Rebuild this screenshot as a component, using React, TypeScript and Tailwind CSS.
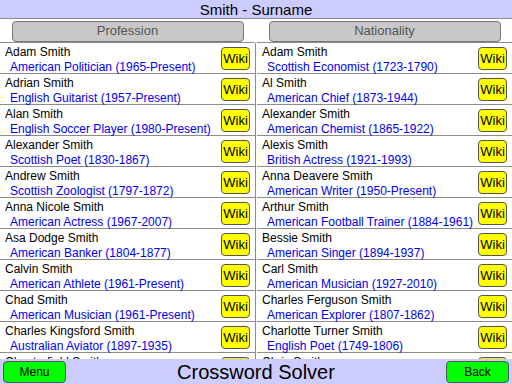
const left: [string, string][] = [
  ["Adam Smith", "American Politician (1965-Present)"],
  ["Adrian Smith", "English Guitarist (1957-Present)"],
  ["Alan Smith", "English Soccer Player (1980-Present)"],
  ["Alexander Smith", "Scottish Poet (1830-1867)"],
  ["Andrew Smith", "Scottish Zoologist (1797-1872)"],
  ["Anna Nicole Smith", "American Actress (1967-2007)"],
  ["Asa Dodge Smith", "American Banker (1804-1877)"],
  ["Calvin Smith", "American Athlete (1961-Present)"],
  ["Chad Smith", "American Musician (1961-Present)"],
  ["Charles Kingsford Smith", "Australian Aviator (1897-1935)"],
  ["Chesterfield Smith", "American Lawyer (1917-2003)"],
];

const right: [string, string][] = [
  ["Adam Smith", "Scottish Economist (1723-1790)"],
  ["Al Smith", "American Chief (1873-1944)"],
  ["Alexander Smith", "American Chemist (1865-1922)"],
  ["Alexis Smith", "British Actress (1921-1993)"],
  ["Anna Deavere Smith", "American Writer (1950-Present)"],
  ["Arthur Smith", "American Football Trainer (1884-1961)"],
  ["Bessie Smith", "American Singer (1894-1937)"],
  ["Carl Smith", "American Musician (1927-2010)"],
  ["Charles Ferguson Smith", "American Explorer (1807-1862)"],
  ["Charlotte Turner Smith", "English Poet (1749-1806)"],
  ["Chris Smith", "American Politician (1951-Present)"],
];

const Row = ({ name, desc }: { name: string; desc: string }) => (
  <div className="flex h-[31px] shrink-0 items-start border-b border-[#8c8c8c] pt-[2px]">
    <div className="flex-1 min-w-0 pl-[5px]">
      <div className="text-[12px] leading-[15px] text-black whitespace-nowrap">{name}</div>
      <div className="pl-[5px] text-[12px] leading-[15px] text-[#0000ee] whitespace-nowrap">{desc}</div>
    </div>
    <button className="mt-[2px] mr-[5px] h-[23px] w-[29px] rounded-[4px] border border-[#555] bg-[#ffff00] text-[13px] leading-none text-black">
      Wiki
    </button>
  </div>
);

const Column = ({ title, rows }: { title: string; rows: [string, string][] }) => (
  <div className="flex flex-1 flex-col min-w-0">
    <div className="flex h-[24px] shrink-0 items-center justify-center border-b border-[#8c8c8c] px-[8px] pt-px">
      <div className="flex h-[21px] w-[232px] items-center justify-center rounded-[4px] border border-[#777] bg-[#c8c8c8] text-[13px] text-[#555]">
        {title}
      </div>
    </div>
    <div className="flex flex-col overflow-hidden">
      {rows.map(([n, d]) => (
        <Row key={n + d} name={n} desc={d} />
      ))}
    </div>
  </div>
);

export default function App() {
  return (
    <div
      className="flex h-[384px] w-[512px] flex-col overflow-hidden bg-white"
      style={{ fontFamily: '"Liberation Sans", Arial, sans-serif' }}
    >
      <div className="flex h-[19px] shrink-0 items-center justify-center border-b border-[#8c8c8c] bg-[#ccccff] text-[15px] leading-none text-black">
        Smith - Surname
      </div>
      <div className="flex flex-1 min-h-0 overflow-hidden">
        <Column title="Profession" rows={left} />
        <div className="mt-[24px] w-px bg-[#8c8c8c]" />
        <div className="w-px" />
        <Column title="Nationality" rows={right} />
      </div>
      <div className="flex h-[25px] shrink-0 items-center justify-between bg-[#ccccff] px-[3px]">
        <button className="h-[22px] w-[63px] rounded-[4px] border border-[#555] bg-[#00ff00] text-[12px] text-black">
          Menu
        </button>
        <div className="text-[20px] leading-none text-black">Crossword Solver</div>
        <button className="h-[22px] w-[63px] rounded-[4px] border border-[#555] bg-[#00ff00] text-[12px] text-black">
          Back
        </button>
      </div>
    </div>
  );
}
